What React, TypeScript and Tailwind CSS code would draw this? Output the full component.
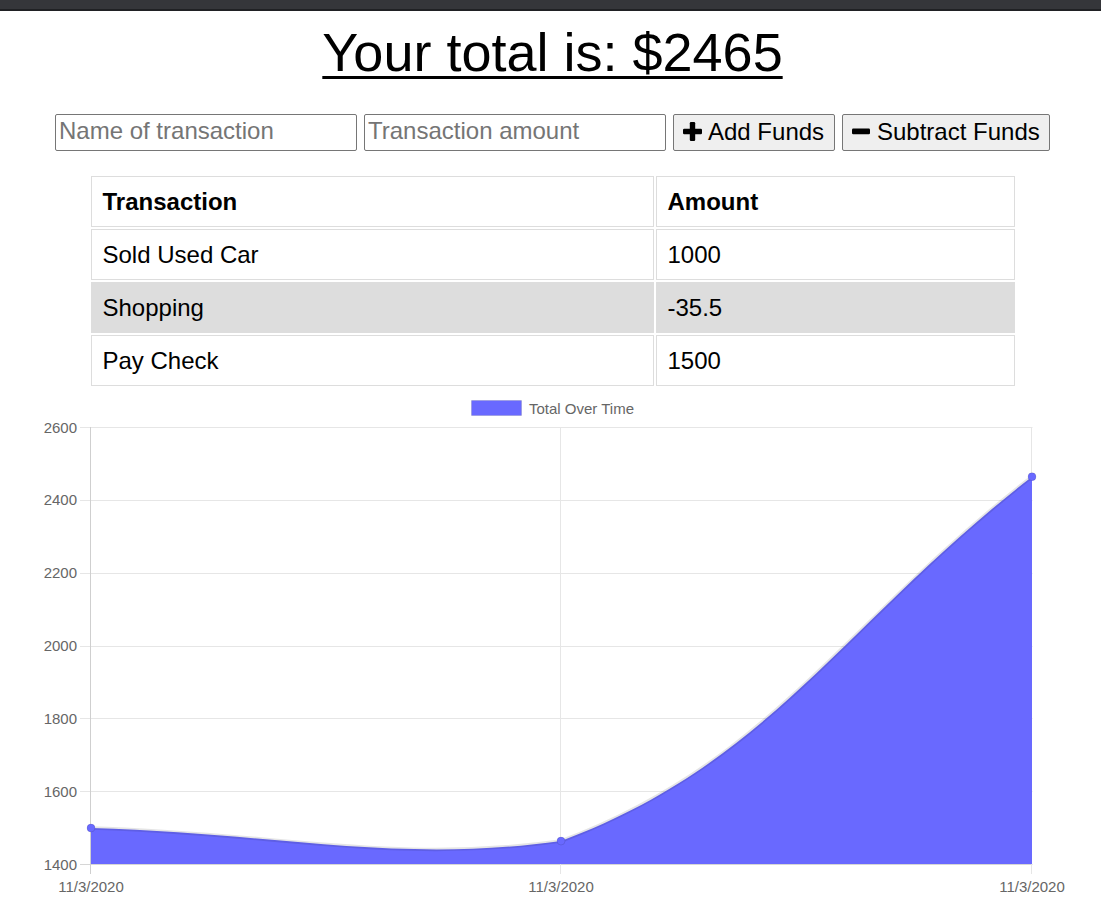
import React from "react";

const FONT = { fontFamily: '"Liberation Sans", Arial, Helvetica, sans-serif' };

function PlusIcon() {
  return (
    <svg width="19" height="19" viewBox="0 0 19 19" className="shrink-0">
      <rect x="6.8" y="0" width="5.4" height="19" rx="1.2" fill="#000" />
      <rect x="0" y="6.8" width="19" height="5.4" rx="1.2" fill="#000" />
    </svg>
  );
}

function MinusIcon() {
  return (
    <svg width="18" height="19" viewBox="0 0 18 19" className="shrink-0">
      <rect x="0" y="6.6" width="18" height="5.6" rx="1.2" fill="#000" />
    </svg>
  );
}

const rows = [
  { name: "Sold Used Car", amount: "1000", gray: false },
  { name: "Shopping", amount: "-35.5", gray: true },
  { name: "Pay Check", amount: "1500", gray: false },
];

function Chart() {
  const top = 427;
  const bottom = 864;
  const yTicks = [2600, 2400, 2200, 2000, 1800, 1600, 1400];
  const yFor = (v: number) => bottom - ((v - 1400) / 1200) * (bottom - top);
  const xs = [91, 561, 1032];
  const area =
    "M91,828 C279,833.2 394.9,864 561,841 C771.3,762.6 843.6,622.6 1032,476.7";
  return (
    <svg
      width="1101"
      height="515"
      viewBox="0 390 1101 515"
      className="block"
      style={FONT}
    >
      <rect x="471.5" y="400.5" width="50" height="15" fill="#6969ff" stroke="rgba(0,0,0,0.1)" strokeWidth="1" />
      <text x="529" y="408" fontSize="15" fill="#666" dominantBaseline="central">
        Total Over Time
      </text>

      {yTicks.map((v) => {
        const y = Math.round(yFor(v)) + 0.5;
        return (
          <g key={v}>
            <line x1="80" x2="1032.5" y1={y} y2={y} stroke={v === 1400 ? "#d6d6d6" : "#e6e6e6"} strokeWidth="1" />
            <text x="77" y={yFor(v)} fontSize="15" fill="#666" textAnchor="end" dominantBaseline="central">
              {v}
            </text>
          </g>
        );
      })}

      {xs.map((x, i) => (
        <g key={x}>
          <line x1={x - 0.5} x2={x - 0.5} y1={top} y2="874" stroke={i === 0 ? "#cfcfcf" : "#e6e6e6"} strokeWidth="1" />
          <text x={x} y="886" fontSize="15" fill="#666" textAnchor="middle" dominantBaseline="central">
            11/3/2020
          </text>
        </g>
      ))}

      <path d={area + " L1032,864 L91,864 Z"} fill="#6969ff" />
      <path d={area} fill="none" stroke="rgba(0,0,0,0.1)" strokeWidth="3.5" />

      <circle cx="91" cy="828" r="4" fill="#6969ff" stroke="rgba(0,0,0,0.1)" strokeWidth="1" />
      <circle cx="561" cy="841" r="4" fill="#6969ff" stroke="rgba(0,0,0,0.1)" strokeWidth="1" />
      <circle cx="1032" cy="476.7" r="4" fill="#6969ff" stroke="rgba(0,0,0,0.1)" strokeWidth="1" />
    </svg>
  );
}

export default function App() {
  return (
    <div className="w-full bg-white text-black overflow-hidden h-[909px]" style={FONT}>
      <div className="h-[11px] bg-[#35363a] border-b-2 border-[#202124]" />

      <div className="flex justify-center pl-[4px] mt-[11px]">
        <h1 className="text-[54px] leading-[61px] font-normal underline decoration-[3px] underline-offset-[5px]">
          Your total is: $2465
        </h1>
      </div>

      <div className="flex justify-center pl-[4px] mt-[31px] gap-[7px]">
        <input
          placeholder="Name of transaction"
          className="w-[302px] h-[37px] border border-[#767676] rounded-[2px] px-[3px] pb-[3px] text-[24px] text-black placeholder:text-[#757575] outline-none bg-white"
          style={FONT}
        />
        <input
          placeholder="Transaction amount"
          className="w-[302px] h-[37px] border border-[#767676] rounded-[2px] px-[3px] pb-[3px] text-[24px] text-black placeholder:text-[#757575] outline-none bg-white"
          style={FONT}
        />
        <button
          className="h-[37px] w-[162px] border border-[#767676] rounded-[2px] bg-[#efefef] flex items-center gap-[6px] px-[9px] pb-[2px] text-[24px] text-black"
          style={FONT}
        >
          <PlusIcon />
          <span>Add Funds</span>
        </button>
        <button
          className="h-[37px] w-[208px] border border-[#767676] rounded-[2px] bg-[#efefef] flex items-center gap-[7px] px-[9px] pb-[2px] text-[24px] text-black"
          style={FONT}
        >
          <MinusIcon />
          <span>Subtract Funds</span>
        </button>
      </div>

      <div className="flex justify-center pl-[4px] mt-[23px]">
        <table className="border-separate border-spacing-[2px] text-[24px]">
          <thead>
            <tr>
              <th className="w-[563px] h-[51px] border border-[#dddddd] pl-[11px] text-left font-bold align-middle">
                Transaction
              </th>
              <th className="w-[359px] h-[51px] border border-[#dddddd] pl-[11px] text-left font-bold align-middle">
                Amount
              </th>
            </tr>
          </thead>
          <tbody>
            {rows.map((r) => (
              <tr key={r.name}>
                <td
                  className={
                    "h-[51px] border border-[#dddddd] pl-[11px] align-middle " +
                    (r.gray ? "bg-[#dddddd]" : "bg-white")
                  }
                >
                  {r.name}
                </td>
                <td
                  className={
                    "h-[51px] border border-[#dddddd] pl-[11px] align-middle " +
                    (r.gray ? "bg-[#dddddd]" : "bg-white")
                  }
                >
                  {r.amount}
                </td>
              </tr>
            ))}
          </tbody>
        </table>
      </div>

      <div className="mt-[2px]">
        <Chart />
      </div>
    </div>
  );
}
